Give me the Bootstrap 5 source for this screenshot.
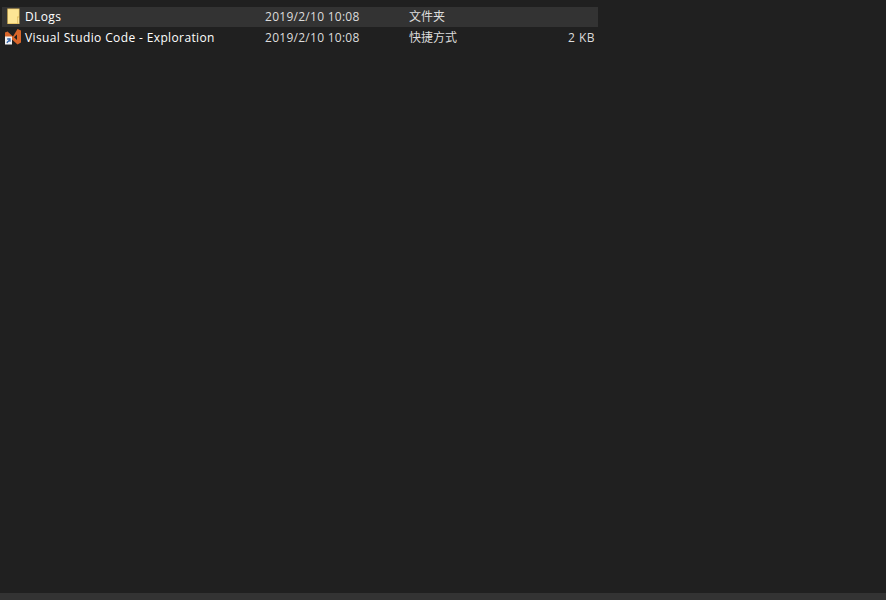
<!doctype html>
<html lang="zh">
<head>
<meta charset="utf-8">
<link href="https://cdn.jsdelivr.net/npm/bootstrap@5.3.0/dist/css/bootstrap.min.css" rel="stylesheet">
<style>
html,body{height:100%;}
body{background:#202020;color:#fff;font-family:"Open Sans","Noto Sans CJK SC",sans-serif;font-size:12px;overflow:hidden;}
.shell{height:600px;}
.listing{padding-top:7px;width:598px;}
.filerow{height:20px;line-height:20px;margin-left:2px;}
.filerow.sel{background:#333333;}
.filerow+.filerow .celltext{padding-top:1px;}
.cell-icon{width:23px;padding-left:2px;}
.cell-name{width:240px;color:#fff;letter-spacing:.37px;}
.cell-date{width:144px;color:#dcdcdc;letter-spacing:.27px;}
.cell-type{width:100px;color:#dcdcdc;}
.cell-size{width:87px;color:#dcdcdc;text-align:right;padding-right:1px;letter-spacing:.5px;}
.statusstrip{height:7px;background:#333333;}
</style>
</head>
<body>
<div class="shell d-flex flex-column">
  <div class="listing flex-grow-1">
    <div class="filerow sel d-flex">
      <div class="cell-icon d-flex flex-shrink-0">
        <svg width="18" height="20" viewBox="0 0 18 20"><path d="M3.300 1.500h12.200V17H3.300z" fill="#e3bd5c"/><path d="M4 2.200h10.800V9.500H13V16.300H4z" fill="#fde595"/><path d="M13.800 10.500h1v5.800h-1z" fill="#fdeaa8"/></svg>
      </div>
      <div class="celltext cell-name flex-shrink-0">DLogs</div>
      <div class="celltext cell-date flex-shrink-0">2019/2/10 10:08</div>
      <div class="celltext cell-type flex-shrink-0">文件夹</div>
      <div class="celltext cell-size flex-shrink-0"></div>
    </div>
    <div class="filerow d-flex">
      <div class="cell-icon d-flex flex-shrink-0">
        <svg width="18" height="20" viewBox="0 0 18 20"><path fill-rule="evenodd" d="M13.500 2L17 3.500v12l-3.500 2L6 10.800l-3.500 2.700L1 12.500V5.500L3.500 4.500 9 9.500zM13 7.500v5.500l-3-2.800z" fill="#d9662a"/><rect x="1" y="9.500" width="7" height="8" fill="#f2f2f2"/><path d="M2.800 15.800l2.400-2.400M3.200 12h2.800v2.800" stroke="#2a5fa8" stroke-width="1.300" fill="none"/></svg>
      </div>
      <div class="celltext cell-name flex-shrink-0">Visual Studio Code - Exploration</div>
      <div class="celltext cell-date flex-shrink-0">2019/2/10 10:08</div>
      <div class="celltext cell-type flex-shrink-0">快捷方式</div>
      <div class="celltext cell-size flex-shrink-0">2 KB</div>
    </div>
  </div>
  <div class="statusstrip"></div>
</div>
<script src="https://cdn.jsdelivr.net/npm/bootstrap@5.3.0/dist/js/bootstrap.bundle.min.js"></script>
</body>
</html>
